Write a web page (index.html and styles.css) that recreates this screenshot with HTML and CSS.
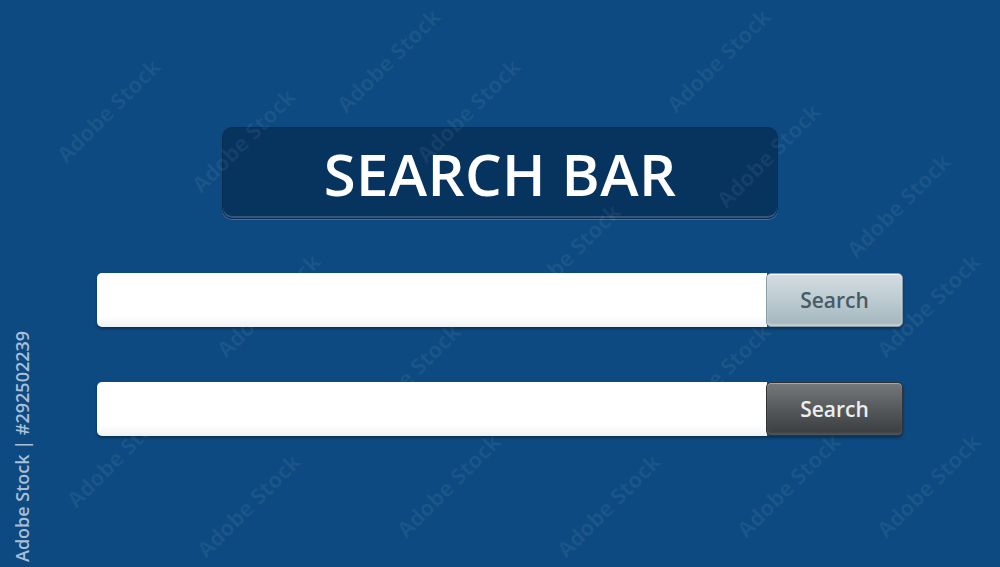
FILE: index.html
```html
<!DOCTYPE html>
<html lang="en">
<head>
    <meta charset="UTF-8">
    <meta name="viewport" content="width=device-width, initial-scale=1.0">
    <title>Search Bar</title>
    <link rel="stylesheet" href="styles.css">
</head>
<body>
    <div class="stage">
        <div class="title-box">
            <h1>SEARCH BAR</h1>
        </div>

        <form class="search-bar light" onsubmit="return false">
            <input type="text" class="search-input" aria-label="Search">
            <button type="submit" class="search-btn">Search</button>
        </form>

        <form class="search-bar dark" onsubmit="return false">
            <input type="text" class="search-input" aria-label="Search">
            <button type="submit" class="search-btn">Search</button>
        </form>
    </div>

    <div class="marks">
        <span style="left:40px;top:95px">Adobe Stock</span>
        <span style="left:175px;top:125px">Adobe Stock</span>
        <span style="left:320px;top:45px">Adobe Stock</span>
        <span style="left:400px;top:95px">Adobe Stock</span>
        <span style="left:650px;top:45px">Adobe Stock</span>
        <span style="left:700px;top:140px">Adobe Stock</span>
        <span style="left:830px;top:190px">Adobe Stock</span>
        <span style="left:860px;top:290px">Adobe Stock</span>
        <span style="left:500px;top:240px">Adobe Stock</span>
        <span style="left:200px;top:290px">Adobe Stock</span>
        <span style="left:340px;top:360px">Adobe Stock</span>
        <span style="left:650px;top:360px">Adobe Stock</span>
        <span style="left:50px;top:440px">Adobe Stock</span>
        <span style="left:380px;top:470px">Adobe Stock</span>
        <span style="left:720px;top:470px">Adobe Stock</span>
        <span style="left:180px;top:490px">Adobe Stock</span>
        <span style="left:540px;top:490px">Adobe Stock</span>
        <span style="left:860px;top:470px">Adobe Stock</span>
    </div>

    <div class="stock-id">Adobe Stock | #292502239</div>
</body>
</html>
```

FILE: styles.css
```css
* {
    margin: 0;
    padding: 0;
    box-sizing: border-box;
}

html, body {
    height: 100%;
}

body {
    font-family: 'Open Sans', 'Noto Sans', sans-serif;
    background: #0d4a81;
    overflow: hidden;
    position: relative;
}

.stage {
    width: 806px;
    margin: 0 auto;
    padding-top: 127px;
    display: flex;
    flex-direction: column;
    align-items: center;
}

.title-box {
    width: 556px;
    height: 92px;
    background: #07345f;
    border: 1px solid #0a2c50;
    border-radius: 10px;
    box-shadow: inset 0 -2px 0 rgba(255,255,255,0.18), 0 1px 0 rgba(150,190,230,0.35);
    display: flex;
    align-items: center;
    justify-content: center;
}

.title-box h1 {
    color: #fff;
    font-size: 58px;
    font-weight: 600;
    letter-spacing: 0.4px;
    margin-top: 0;
}

.search-bar {
    width: 806px;
    height: 54px;
    display: flex;
    margin-top: 54px;
    border-radius: 5px;
    box-shadow: 0 2px 3px rgba(0,0,0,0.35);
}

.search-bar.dark {
    margin-top: 55px;
}

.search-input {
    flex: 1;
    border: none;
    border-radius: 5px 0 0 5px;
    background: linear-gradient(#ffffff 0%, #ffffff 80%, #eef1f4 100%);
    outline: none;
    font-size: 18px;
    padding: 0 14px;
}

.search-btn {
    width: 137px;
    margin-left: -1px;
    border-radius: 5px;
    font-family: 'Open Sans', sans-serif;
    font-size: 21px;
    font-weight: 600;
    cursor: pointer;
}

.light .search-btn {
    background: linear-gradient(#d3dde2 0%, #bccbd1 50%, #a3b5bd 100%);
    border: 1px solid #8a9ea8;
    box-shadow: inset 0 1px 0 rgba(255,255,255,0.8), inset 0 -2px 2px rgba(255,255,255,0.35);
    color: #4b5a62;
}

.dark .search-btn {
    background: linear-gradient(#75797c 0%, #55595c 50%, #3a3d40 100%);
    border: 1px solid #2f3235;
    box-shadow: inset 0 1px 0 rgba(255,255,255,0.35), inset 0 -2px 2px rgba(255,255,255,0.12);
    color: #eceeef;
}

/* faint diagonal stock marks */
.marks {
    position: absolute;
    inset: 0;
    pointer-events: none;
}

.marks span {
    position: absolute;
    font-size: 22px;
    font-weight: 700;
    color: rgba(255,255,255,0.06);
    transform: rotate(-45deg);
    white-space: nowrap;
}

.stock-id {
    position: absolute;
    left: 10px;
    top: 562px;
    transform-origin: 0 0;
    transform: rotate(-90deg);
    color: #a9bfd6;
    font-family: 'Open Sans', sans-serif;
    font-size: 18px;
    font-weight: 600;
    white-space: nowrap;
}
```
